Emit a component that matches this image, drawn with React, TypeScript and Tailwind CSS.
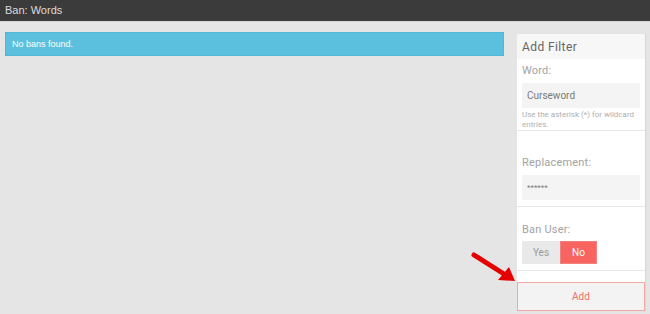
import React from 'react';

const labelCls = 'h-[16px] leading-[16px] text-[11px] text-[#a3a3a3] tracking-[0.2px]';
const inputCls = 'h-[25px] bg-[#f4f4f4] px-[5px] flex items-center text-[#7a7a7a]';

export default function App() {
  return (
    <div className="relative w-[650px] h-[314px] bg-[#e5e5e5] flex flex-col overflow-hidden font-['Liberation_Sans',Arial,sans-serif]">
      {/* Top bar */}
      <div className="h-[21px] bg-[#3b3b3b] text-[#dcdcdc] text-[11px] leading-[21px] px-[5px]">Ban: Words</div>
      <div className="h-px bg-[#d5d5d5]" />

      <div className="flex flex-1 min-h-0">
        {/* Left column */}
        <div className="w-[504px] pl-[5px] pt-[10px]">
          <div className="h-[24px] bg-[#5bc0de] border border-[#4fb6d5] text-white text-[9px] leading-[22px] px-[6px]">
            No bans found.
          </div>
        </div>

        {/* Right panel */}
        <div className="w-[128px] ml-[13px] mt-[12px] mb-[3px] bg-white flex flex-col shadow-[1px_0_1px_rgba(0,0,0,0.06)] font-['Roboto',sans-serif]">
          <div className="h-[25px] bg-[#f7f7f7] px-[5px] flex items-center text-[12px] text-[#666] tracking-[0.4px]">Add Filter</div>

          <div className="px-[5px] pt-[4px] border-b border-[#e6e6e6]">
            <div className={labelCls}>Word:</div>
            <div className={`${inputCls} mt-[4px] text-[10px]`}>Curseword</div>
            <div className="mt-[2px] text-[8px] leading-[10px] text-[#b0b0b0]">
              Use the asterisk (*) for wildcard entries.
            </div>
          </div>

          <div className="px-[5px] pt-[24px] pb-[6px] border-b border-[#e6e6e6]">
            <div className={labelCls}>Replacement:</div>
            <div className={`${inputCls} mt-[4px] text-[8px]`}>******</div>
          </div>

          <div className="px-[5px] pt-[15px] pb-[6px] border-b border-[#e6e6e6]">
            <div className={labelCls}>Ban User:</div>
            <div className="flex mt-[3px] h-[23px] text-[10px]">
              <div className="w-[38px] bg-[#e9e9e9] text-[#9a9a9a] flex items-center justify-center">Yes</div>
              <div className="w-[37px] bg-[#f8645f] border border-[#f3817d] text-white flex items-center justify-center">No</div>
            </div>
          </div>

          <div className="pt-[11px] flex-1 flex flex-col">
            <div className="flex-1 bg-[#f3f3f3] border border-[#f4a7a5] text-[#ef6d69] text-[10px] flex items-center justify-center">Add</div>
          </div>
        </div>
      </div>

      {/* Red arrow annotation */}
      <svg className="absolute left-[468px] top-[248px]" width="52" height="38" viewBox="0 0 52 38">
        <line x1="6" y1="7" x2="36" y2="26" stroke="#e50000" strokeWidth="5" strokeLinecap="round" />
        <polygon points="47,33 30,32 41,19" fill="#e50000" />
      </svg>
    </div>
  );
}
